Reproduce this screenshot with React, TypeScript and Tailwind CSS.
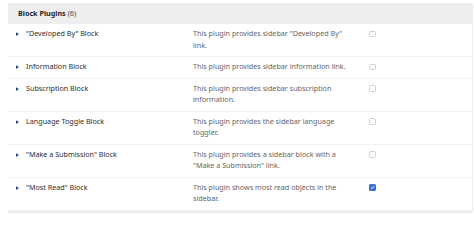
const plugins = [
  { name: '"Developed By" Block', desc: 'This plugin provides sidebar "Developed By" link.', on: false },
  { name: 'Information Block', desc: 'This plugin provides sidebar information link.', on: false },
  { name: 'Subscription Block', desc: 'This plugin provides sidebar subscription information.', on: false },
  { name: 'Language Toggle Block', desc: 'This plugin provides the sidebar language toggler.', on: false },
  { name: '"Make a Submission" Block', desc: 'This plugin provides a sidebar block with a "Make a Submission" link.', on: false },
  { name: '"Most Read" Block', desc: 'This plugin shows most read objects in the sidebar.', on: true },
];

function Checkbox({ checked }: { checked: boolean }) {
  if (checked) {
    return (
      <span className="mt-[2.5px] flex h-[6.5px] w-[6.5px] items-center justify-center rounded-[1.5px] bg-[#3b72d9]">
        <svg viewBox="0 0 8 8" className="h-[5px] w-[5px]">
          <path d="M1.5 4.2 L3.2 5.8 L6.5 2" fill="none" stroke="white" strokeWidth="1.4" />
        </svg>
      </span>
    );
  }
  return <span className="mt-[2.5px] block h-[6.5px] w-[6.5px] rounded-[1.5px] border border-[#cfcfcf] bg-white" />;
}

export default function App() {
  return (
    <div className="h-[213px] w-[474px] overflow-hidden bg-white pt-[3px] pl-[8px] pr-[1px] font-['Noto_Sans',sans-serif] text-[7.2px] leading-[11.5px]">
      <div className="border-r border-[#ececec]">
        <div className="flex h-[21px] items-center bg-[#eeeeee] pl-[10px] text-[#1f1f1f]">
          <span className="font-bold">Block Plugins</span>
          <span className="ml-[2px] text-[#4a4a4a]">(6)</span>
        </div>
        {plugins.map((p) => (
          <div key={p.name} className="flex border-b border-[#f0f0f0] pt-[4px] pb-[5px] pl-[8px]">
            <div className="flex w-[177px] items-start text-[#2e2e2e]">
              <svg viewBox="0 0 4 5" className="mt-[4px] h-[4px] w-[3px] shrink-0">
                <path d="M0 0 L4 2.5 L0 5 Z" fill="#2d4d7e" />
              </svg>
              <span className="ml-[7px]">{p.name}</span>
            </div>
            <div className="w-[160px] text-[#666]">{p.desc}</div>
            <div className="ml-[16px]">
              <Checkbox checked={p.on} />
            </div>
          </div>
        ))}
        <div className="h-[5px] bg-[#eeeeee]" />
      </div>
    </div>
  );
}
